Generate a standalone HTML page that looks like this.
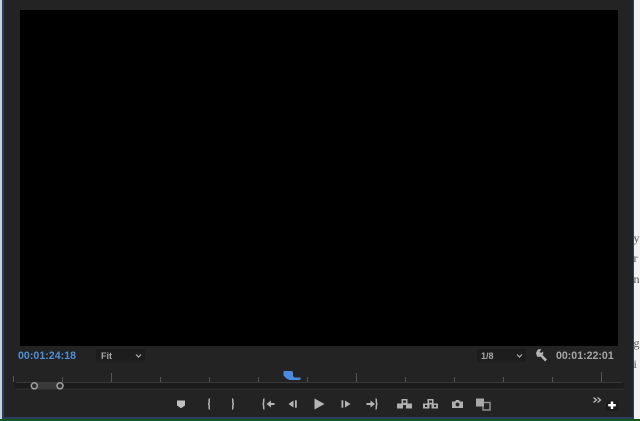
<!DOCTYPE html>
<html><head><meta charset="utf-8">
<style>
html,body{margin:0;padding:0}
body{width:640px;height:421px;overflow:hidden;background:#f2f2f2;position:relative;font-family:"Liberation Sans",sans-serif}
.a{position:absolute}
.t{position:absolute;font-weight:bold;white-space:nowrap;filter:blur(.3px)}
.s{position:absolute;font-family:"Liberation Serif",serif;font-size:12px;color:#555;left:633.500px;white-space:nowrap;filter:blur(.3px)}
</style></head><body>
<div class="s" style="top:231px">y</div>
<div class="s" style="top:251px">r</div>
<div class="s" style="top:272px">n</div>
<div class="s" style="top:336px">g</div>
<div class="s" style="top:357px">i</div>
<div class="a" style="left:0;top:0;width:2px;height:421px;background:#c9d3e0"></div>
<div class="a" style="left:2px;top:0;width:632px;height:419px;background:#2c3f63"></div>
<div class="a" style="left:4px;top:0;width:629px;height:417px;background:#232323"></div>
<div class="a" style="left:0;top:419px;width:640px;height:2px;background:#0f5a1c"></div>
<div class="a" style="left:20px;top:10px;width:598px;height:336px;background:#000"></div>

<div class="t" style="left:18px;top:350px;font-size:10.6px;letter-spacing:.03px;line-height:12px;color:#4f8fd6">00:01:24:18</div>
<div class="a" style="left:96px;top:349px;width:49px;height:13px;background:#1d1d1d;border-radius:2px"></div>
<div class="t" style="left:101px;top:351px;font-size:9px;line-height:10px;font-weight:bold;color:#a8a8a8">Fit</div>
<div class="a" style="left:477px;top:349px;width:49px;height:13px;background:#1d1d1d;border-radius:2px"></div>
<div class="t" style="left:481px;top:351px;font-size:9px;line-height:10px;font-weight:bold;color:#a8a8a8">1/8</div>
<div class="t" style="left:556px;top:350px;font-size:10.6px;line-height:12px;color:#a6a6a6">00:01:22:01</div>

<svg class="a" style="left:0;top:0;filter:blur(.3px)" width="640" height="421" viewBox="0 0 640 421">
<g fill="none" stroke="#b0b0b0" stroke-width="1.200">
<path d="M136 354.500l2.500 2.500 2.500-2.500"/>
<path d="M517 354.500l2.500 2.500 2.500-2.500"/>
</g>
<path d="M536 353l1.500-3 1.500-1 2.500 .5-2 2 1.500 1.500 2-1.500 .3 2.500-.8 1 4.500 4.500-2 2-4.500-5-1.500 .5-2-.5z" fill="#b5b5b5"/>

<g stroke="#555" stroke-width="1">
<path d="M13.500 376v6M62.500 377v5M111.500 373v9M160.500 377v5M209.500 377v5M258.500 377v5M307.500 377v5M356.500 373v9M405.500 377v5M454.500 377v5M503.500 377v5M552.500 377v5M601.500 372v10"/>
</g>
<path d="M14 382h608q2 0 2 2v2q0 2-2 2H18q-4 0-4-3z" fill="#1c1c1c"/>
<path d="M16 382.500h606" stroke="#383838" fill="none"/>
<path d="M16 389.500h608" stroke="#2c2c2c" fill="none"/>
<rect x="34" y="382" width="26" height="7" fill="#3a3a3a"/>
<circle cx="34.300" cy="385.800" r="3" fill="#2a2a2a" stroke="#a0a0a0" stroke-width="1.500"/>
<circle cx="60" cy="385.800" r="3" fill="#2a2a2a" stroke="#a0a0a0" stroke-width="1.500"/>
<path d="M283.500 371h8l1.500 1v4l1.500 1.500h6v2l-1 .5h-10l-3-1.500-3-3z" fill="#4a8ae0"/>

<path d="M177 400.500h8v5l-4 2.800-4-2.800z" fill="#c0c0c0"/>
<g fill="none" stroke="#b5b5b5" stroke-width="1.500">
<path d="M210 399c-1 0-.8 1-.8 2.500s-.2 2.500-1.200 2.500c1 0 1.200 1 1.200 2.500s-.2 2.500.8 2.500"/>
<path d="M232 399c1 0 .8 1 .8 2.500s.2 2.500 1.200 2.500c-1 0-1.200 1-1.200 2.500s.2 2.500-.8 2.500"/>
<path d="M264.500 399c-1 0-.8 1-.8 2.500s-.2 2.500-1.200 2.500c1 0 1.200 1 1.200 2.500s-.2 2.500.8 2.500"/>
<path d="M375.500 399c1 0 .8 1 .8 2.500s.2 2.500 1.200 2.500c-1 0-1.200 1-1.200 2.500s.2 2.500-.8 2.500"/>
</g>
<path d="M266.500 404l4.500-3.500v2.500h3.500v2H271v2.500z" fill="#b5b5b5"/>
<path d="M288.500 404l5-3.500v7z" fill="#b5b5b5"/><rect x="295" y="400.300" width="1.800" height="7.400" fill="#b5b5b5"/>
<path d="M314.500 398.500l10 5.500-10 5.500z" fill="#b5b5b5"/>
<rect x="341.500" y="400.300" width="1.800" height="7.400" fill="#b5b5b5"/><path d="M345 400.500l5.500 3.500-5.500 3.500z" fill="#b5b5b5"/>
<path d="M375 404l-4.500-3.500v2.500h-4v2h4v2.500z" fill="#b5b5b5"/>

<g fill="#b0b0b0">
<path d="M397 403.500h4.500v-4.500h6v4.500h4.500v5h-6v-3.500h-3v3.500h-6z"/>
<rect x="403" y="400.500" width="3" height="2.200" fill="#232323"/>
<path d="M423 403.500h4.500v-4.500h6v4.500h4.500v5h-15z"/>
<rect x="429" y="400.500" width="3" height="2.200" fill="#232323"/>
<rect x="425" y="405" width="2.200" height="2" fill="#232323"/>
<rect x="429.500" y="404.500" width="2" height="4" fill="#232323"/>
<rect x="434" y="405" width="2.200" height="2" fill="#232323"/>
<path d="M452 401.500h3l1-1.500h3l1 1.500h3v6.500h-11z"/>
</g>
<circle cx="457.500" cy="404.500" r="1.900" fill="#232323" stroke="#6a6a6a" stroke-width=".6"/>
<rect x="483" y="402.500" width="7" height="7.500" fill="none" stroke="#8e8e8e" stroke-width="1.500"/>
<rect x="476" y="398.500" width="8" height="8" fill="#a8a8a8"/>

<g fill="none" stroke="#b5b5b5" stroke-width="1.300">
<path d="M593.500 397.500l3 2.500-3 2.500M597.500 397.500l3 2.500-3 2.500"/>
</g>
<rect x="606" y="400" width="13" height="11" rx="2" fill="#1c1c1c"/>
<path d="M612 401.500v7.500M608.200 405.200h7.600" stroke="#fff" stroke-width="2.400" fill="none"/>
</svg>
</body></html>
